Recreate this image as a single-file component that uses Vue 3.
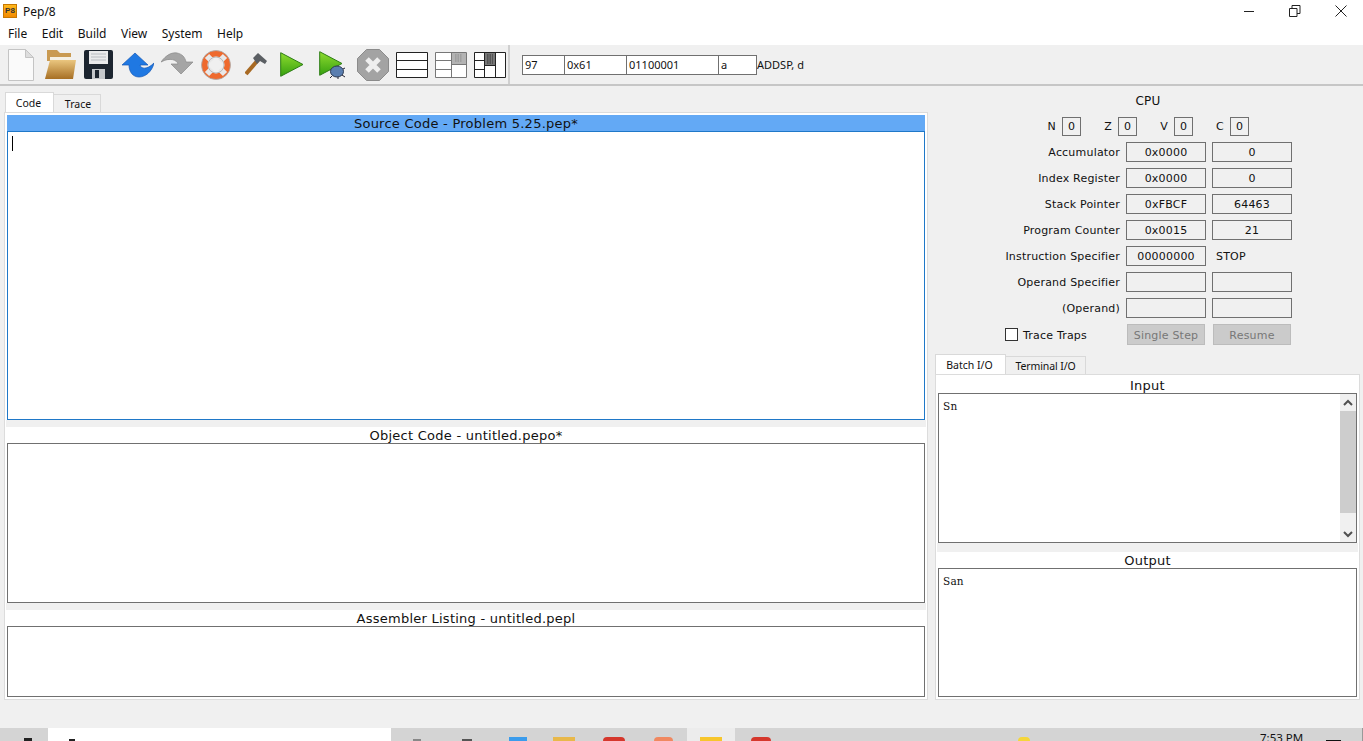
<script setup>
const menus = ['File', 'Edit', 'Build', 'View', 'System', 'Help']
const flags = ['N', 'Z', 'V', 'C']
const registers = [
  { label: 'Accumulator', hex: '0x0000', dec: '0' },
  { label: 'Index Register', hex: '0x0000', dec: '0' },
  { label: 'Stack Pointer', hex: '0xFBCF', dec: '64463' },
  { label: 'Program Counter', hex: '0x0015', dec: '21' },
]
</script>

<template>
  <div class="app">
    <header class="titlebar">
      <span class="logo">P8</span>
      <span class="title">Pep/8</span>
      <div class="winbtns">
        <svg width="12" height="12" viewBox="0 0 12 12"><path d="M1 6.500h10" stroke="#222" fill="none"/></svg>
        <svg width="12" height="12" viewBox="0 0 12 12"><path d="M.5 3.500h7.500v8h-7.500zM3 3.500V.5h8v8h-3" stroke="#222" fill="none"/></svg>
        <svg width="12" height="12" viewBox="0 0 12 12"><path d="M.5.5l11 11M11.500.5l-11 11" stroke="#222" fill="none"/></svg>
      </div>
    </header>
    <nav class="menubar"><span v-for="m in menus" :key="m">{{ m }}</span></nav>

    <div class="toolbar">
      <div class="tools">
        <svg class="t-new" width="26" height="32" viewBox="0 0 26 32"><path d="M.5.5h17l8 8v23H.5z" fill="#fafafa" stroke="#c4c4c4"/><path d="M17.500.5v8h8z" fill="#ddd" stroke="#c4c4c4"/></svg>
        <svg class="t-open" width="31" height="31" viewBox="0 0 31 31"><defs><linearGradient id="fo" x1="0" y1="0" x2="0" y2="1"><stop offset="0" stop-color="#eac67f"/><stop offset="1" stop-color="#a76f24"/></linearGradient></defs><path d="M2 1h10l3 3h11v8H2z" fill="#c99a52"/><path d="M5 8h21v6H5z" fill="#f5f0e4"/><path d="M5 11h26l-3 19H0z" fill="url(#fo)"/></svg>
        <svg class="t-save" width="29" height="29" viewBox="0 0 29 29"><rect width="29" height="29" rx="2" fill="#1c2530"/><rect x="5" y="1" width="19" height="13" fill="#e9eaec"/><path d="M7 4h15M7 7h15M7 10h15" stroke="#b8bcc2"/><rect x="8" y="19" width="13" height="10" fill="#c4c7cb"/><rect x="11" y="20" width="4" height="8" fill="#1c2530"/></svg>
        <svg class="t-undo" width="33" height="26" viewBox="0 0 33 26"><path d="M14 1 27 13H19C20 17 26 18 33 11 31 20 24 25 18 25 12 25 8 20 8 13H1Z" fill="#1f78e2" stroke="#1557b5" stroke-width=".7"/></svg>
        <svg class="t-redo" width="32" height="26" viewBox="0 0 32 26"><path d="M0 10C5 3 11 0 16 1 21 2 24 5 25 10H32L20 22 10 12H17C16 8 9 5 0 10Z" fill="#a5a5a5" stroke="#8a8a8a" stroke-width=".7"/></svg>
        <svg class="t-help" width="30" height="30" viewBox="0 0 30 30"><circle cx="15" cy="15" r="11.500" fill="none" stroke="#ee6a2e" stroke-width="6"/><path d="M6 6l5 5M24 6l-5 5M6 24l5-5M24 24l-5-5" stroke="#e8e8e8" stroke-width="6"/><circle cx="15" cy="15" r="14.500" fill="none" stroke="#a9a9a9" stroke-width=".8"/><circle cx="15" cy="15" r="8" fill="none" stroke="#a9a9a9" stroke-width=".8"/></svg>
        <svg class="t-build" width="22" height="23" viewBox="0 0 22 23"><path d="M1 21 13 7" stroke="#a86a24" stroke-width="4"/><path d="M8 5 13 0l9 8-2 3-5-3-3 3z" fill="#5b5f63"/></svg>
        <svg class="t-run" width="24" height="25" viewBox="0 0 24 25"><defs><linearGradient id="pl" x1="0" y1="0" x2="0" y2="1"><stop offset="0" stop-color="#8fdc2f"/><stop offset="1" stop-color="#36a010"/></linearGradient></defs><path d="M.7.7 23 12.500.7 24.300z" fill="url(#pl)" stroke="#2c7d14"/></svg>
        <svg class="t-debug" width="26" height="28" viewBox="0 0 26 28"><path d="M.7.7 23 12.500.7 24.300z" fill="url(#pl)" stroke="#2c7d14"/><ellipse cx="18" cy="20.500" rx="6.500" ry="5.500" fill="#5a7eb0" stroke="#2c3a52"/><path d="M13 25l-2 2M19 26v2M23 24l3 2M24 18l2-1" stroke="#223"/></svg>
        <svg class="t-stop" width="32" height="32" viewBox="0 0 32 32"><path d="M9.500.5h13l9 9v13l-9 9h-13l-9-9v-13z" fill="#a3a3a3" stroke="#8b8b8b"/><path d="M10 10l12 12M22 10 10 22" stroke="#efefef" stroke-width="5"/></svg>
        <svg class="t-lay" width="32" height="26" viewBox="0 0 32 26"><path d="M.5.500h31v25H.5zM.5 8.500h31M.5 17.500h31" fill="#fff" stroke="#222"/></svg>
        <svg class="t-lay" width="32" height="26" viewBox="0 0 32 26"><path d="M.5.500h31v25H.5z" fill="#fff"/><rect x="16" y="1" width="15" height="11" fill="#b3b3b3"/><path d="M20 3h7M20 5h7M20 7h7M20 9h7" stroke="#8b8b8b" stroke-dasharray="1.500 1"/><path d="M.5.500h31v25H.5zM16.500.5v25M.5 8.500h16M.5 17.500h16M16.500 12.500h15" fill="none" stroke="#777"/></svg>
        <svg class="t-lay" width="32" height="26" viewBox="0 0 32 26"><path d="M.5.500h31v25H.5z" fill="#fff"/><rect x="11" y="1" width="10" height="12" fill="#777"/><path d="M13 3h6M13 5h6M13 7h6M13 9h6M13 11h6" stroke="#333" stroke-dasharray="1.500 1"/><path d="M.5.500h31v25H.5zM10.500.5v25M21.500.5v25M.5 8.500h10M.5 17.500h10M10.500 13.500h11" fill="none" stroke="#222"/></svg>
      </div>
      <div class="ascii">
        <span class="f1">97</span><span class="f2">0x61</span><span class="f3">01100001</span><span class="f4">a</span>
        <span class="mnemonic">ADDSP, d</span>
      </div>
    </div>

    <main class="main">
      <section class="left">
        <div class="tabs">
          <span class="tab on t-code">Code</span>
          <span class="tab t-trace">Trace</span>
        </div>
        <div class="panel">
          <div class="pane src">
            <div class="cap hl">Source Code - Problem 5.25.pep*</div>
            <div class="edit focus"><i class="caret"></i></div>
          </div>
          <div class="band"></div>
          <div class="pane obj">
            <div class="cap">Object Code - untitled.pepo*</div>
            <div class="edit"></div>
          </div>
          <div class="band"></div>
          <div class="pane asm">
            <div class="cap">Assembler Listing - untitled.pepl</div>
            <div class="edit"></div>
          </div>
        </div>
      </section>

      <section class="right">
        <div class="cpu">
          <div class="cpu-title">CPU</div>
          <div class="flags">
            <div v-for="f in flags" :key="f" class="flag"><span class="fl">{{ f }}</span><span class="fv">0</span></div>
          </div>
          <div class="regs">
            <template v-for="r in registers" :key="r.label">
              <span class="rl">{{ r.label }}</span><span class="rv">{{ r.hex }}</span><span class="rv">{{ r.dec }}</span>
            </template>
            <span class="rl">Instruction Specifier</span><span class="rv">00000000</span><span class="rt">STOP</span>
            <span class="rl">Operand Specifier</span><span class="rv"></span><span class="rv"></span>
            <span class="rl">(Operand)</span><span class="rv"></span><span class="rv"></span>
          </div>
          <div class="actions">
            <i class="check"></i><span class="trace">Trace Traps</span>
            <span class="btn b1">Single Step</span><span class="btn">Resume</span>
          </div>
        </div>
        <div class="tabs io">
          <span class="tab on t-batch">Batch I/O</span>
          <span class="tab t-term">Terminal I/O</span>
        </div>
        <div class="iopanel">
          <div class="cap">Input</div>
          <div class="iobox inbox">
            <span class="mono">Sn</span>
            <div class="scroll">
              <svg width="16" height="17" viewBox="0 0 16 17"><path d="M4 11l4-4 4 4" fill="none" stroke="#505050" stroke-width="2"/></svg>
              <div class="thumb"></div>
              <svg width="16" height="17" viewBox="0 0 16 17"><path d="M4 7l4 4 4-4" fill="none" stroke="#505050" stroke-width="2"/></svg>
            </div>
          </div>
          <div class="band"></div>
          <div class="cap">Output</div>
          <div class="iobox outbox"><span class="mono">San</span></div>
        </div>
      </section>
    </main>

    <footer class="taskbar">
      <i class="tk-mark"></i>
      <div class="search"><i class="tk-mark2"></i></div>
      <i class="tk-g g1"></i><i class="tk-g g2"></i>
      <i class="ico task-blue"></i><i class="ico folder"></i><i class="ico red r1"></i><i class="ico orange"></i>
      <div class="active"><i class="ico yellow"></i></div>
      <i class="ico red r2"></i>
      <i class="ico sun"></i>
      <span class="clock">7:53 PM</span>
      <i class="notif"></i>
    </footer>
  </div>
</template>

<style scoped>
.app {
  width: 1363px;
  height: 741px;
  overflow: hidden;
  display: flex;
  flex-direction: column;
  background: #f0f0f0;
  color: #111;
  font: 12px "Noto Sans", sans-serif;
}
.titlebar {
  height: 22px;
  background: #fff;
  display: flex;
  align-items: center;
  flex: none;
}
.logo {
  width: 14px;
  height: 14px;
  box-sizing: border-box;
  margin: 0 6px 0 3px;
  background: linear-gradient(#ffb81c, #f28a00);
  border: 1px solid #c77800;
  color: #333;
  font: bold 8px/12px "Liberation Sans", sans-serif;
  text-align: center;
}
.winbtns {
  margin-left: auto;
  display: flex;
  gap: 34px;
  padding-right: 16px;
}
.menubar {
  height: 22px;
  background: #fff;
  display: flex;
  align-items: center;
  gap: 14.500px;
  padding-left: 8px;
  flex: none;
}
.toolbar {
  height: 42px;
  flex: none;
  display: flex;
  align-items: center;
  border-top: 1px solid #fff;
  border-bottom: 2px solid #c6c6c6;
  box-sizing: border-box;
}
.tools {
  display: flex;
  align-items: center;
  width: 510px;
  height: 100%;
  padding-left: 8px;
  box-sizing: border-box;
  border-right: 2px solid #d0d0d0;
}
.tools svg { flex: none; }
.t-new { margin-right: 11px; }
.t-open { margin-right: 8px; }
.t-save { margin-right: 8px; }
.t-undo { margin-right: 7px; }
.t-redo { margin-right: 8px; }
.t-help { margin-right: 14px; }
.t-build { margin-right: 13px; }
.t-run { margin-right: 15px; }
.t-debug { margin-right: 12px; }
.t-stop { margin-right: 7px; }
.t-lay { margin-right: 7px; }
.ascii {
  display: flex;
  align-items: center;
  margin-left: 12px;
  font-size: 11px;
}
.ascii span:not(.mnemonic) {
  height: 20px;
  box-sizing: border-box;
  border: 1px solid #707070;
  border-left-width: 0;
  background: #fff;
  padding-left: 2px;
  line-height: 18px;
}
.f1 { width: 43px; border-left-width: 1px !important; }
.f2 { width: 62px; }
.f3 { width: 92px; }
.f4 { width: 38px; }
.mnemonic { white-space: nowrap; }

.main {
  flex: 1;
  min-height: 0;
  display: flex;
  align-items: flex-start;
  padding: 7px 3px 0 4px;
  gap: 7px;
}
.left { width: 924px; flex: none; }
.right { flex: 1; min-width: 0; }
.tabs {
  display: flex;
  align-items: flex-end;
  height: 19px;
  padding-left: 1px;
  box-sizing: border-box;
}
.tab {
  box-sizing: border-box;
  height: 18px;
  border: 1px solid #d9d9d9;
  border-bottom: 0;
  text-align: center;
  line-height: 19px;
  font-size: 10.500px;
}
.tab.on { background: #fff; height: 20px; margin-top: -2px; line-height: 21px; }
.t-code { width: 49px; padding-right: 2px; }
.t-trace { width: 47px; border-left: 0; padding-left: 2px; }
.panel {
  height: 588px;
  background: #fff;
  border: 1px solid #dcdcdc;
  box-sizing: border-box;
  padding: 2px;
  display: flex;
  flex-direction: column;
}
.band { height: 7px; flex: none; background: #f0f0f0; margin: 0 -1px; }
.pane { display: flex; flex-direction: column; flex: none; }
.src { height: 305px; }
.obj { height: 176px; }
.asm { height: 87px; }
.cap {
  height: 16px;
  flex: none;
  text-align: center;
  font: 13px/17px "DejaVu Sans", sans-serif;
  letter-spacing: .25px;
}
.hl { background: #63a9f5; }
.edit {
  flex: 1;
  background: #fff;
  border: 1px solid #707070;
}
.edit.focus { border-color: #1f78c8; padding: 4px; }
.caret {
  display: block;
  width: 1px;
  height: 15px;
  background: #000;
}

.cpu { height: 262px; display: flex; flex-direction: column; font: 11px "DejaVu Sans", sans-serif; letter-spacing: .2px; }
.cpu-title { text-align: center; font-size: 12px; line-height: 16px; margin-left: 1px; }
.flags {
  display: flex;
  gap: 19px;
  padding: 8px 0 0 109px;
}
.flag { display: flex; align-items: center; gap: 6px; justify-content: flex-end; width: 37px; }
.fv, .rv {
  box-sizing: border-box;
  border: 1px solid #707070;
  text-align: center;
}
.fv { width: 19px; height: 19px; line-height: 17px; flex: none; }
.regs {
  display: grid;
  grid-template-columns: 185px 80px 80px;
  grid-auto-rows: 20px;
  column-gap: 6px;
  row-gap: 6px;
  margin-top: 6px;
}
.rl { text-align: right; line-height: 21px; white-space: nowrap; }
.rv { line-height: 19px; }
.rt { line-height: 21px; padding-left: 4px; }
.actions {
  display: flex;
  align-items: center;
  margin-top: 6px;
  padding-left: 70px;
  height: 21px;
}
.check {
  width: 13px;
  height: 13px;
  border: 1px solid #333;
  background: #fff;
  margin-right: 5px;
  flex: none;
  box-sizing: border-box;
}
.trace { width: 104px; height: 21px; white-space: nowrap; line-height: 23px; }
.btn {
  width: 78px;
  height: 21px;
  box-sizing: border-box;
  background: #cbcbcb;
  border: 1px solid #bcbcbc;
  color: #777;
  text-align: center;
  line-height: 21px;
}
.b1 { margin-right: 8px; }
.tabs.io { padding-left: 0; height: 19px; }
.t-batch { width: 71px; padding-right: 2px; }
.t-term { width: 80px; border-left: 0; letter-spacing: -.1px; }
.iopanel {
  height: 326px;
  box-sizing: border-box;
  background: #fff;
  border: 1px solid #dcdcdc;
  padding: 2px;
  display: flex;
  flex-direction: column;
}
.iobox {
  background: #fff;
  border: 1px solid #707070;
  box-sizing: border-box;
  display: flex;
  justify-content: space-between;
  flex: none;
}
.inbox { height: 150px; }
.outbox { height: 129px; }
.iopanel .band { height: 9px; }
.mono {
  font: 10.500px/14px "DejaVu Serif", serif;
  letter-spacing: .2px;
  padding: 5px 4px;
}
.scroll {
  width: 16px;
  background: #f0f0f0;
  display: flex;
  flex-direction: column;
  flex: none;
}
.scroll svg { flex: none; }
.thumb { flex: 1; background: #cdcdcd; margin-bottom: 12px; }

.taskbar {
  height: 13px;
  flex: none;
  overflow: hidden;
  background: #d4d4d4;
  display: flex;
  align-items: flex-start;
  border-right: 1px solid #999;
}
.taskbar i { display: block; flex: none; }
.tk-mark { width: 8px; height: 3px; margin: 10px 0 0 24px; background: #222; }
.search { width: 343px; height: 13px; margin-left: 16px; background: #fff; flex: none; overflow: hidden; }
.tk-mark2 { width: 6px; height: 2px; margin: 11px 0 0 21px; background: #222; }
.tk-g { height: 2px; margin-top: 11px; }
.g1 { width: 8px; margin-left: 22px; background: #888; }
.g2 { width: 10px; margin-left: 41px; background: #555; }
.ico { height: 4px; margin-top: 9px; }
.task-blue { width: 18px; margin-left: 37px; background: #3b9cec; }
.folder { width: 22px; margin-left: 26px; background: #e8b84a; }
.r1 { width: 22px; margin-left: 28px; border-radius: 11px 11px 0 0; }
.red { background: #d5372c; }
.orange { width: 19px; margin-left: 29px; background: #f08860; border-radius: 10px 10px 0 0; }
.active { width: 48px; height: 13px; margin-left: 14px; background: #ececec; flex: none; overflow: hidden; }
.yellow { width: 22px; margin: 9px 0 0 13px; background: #f7c62c; }
.r2 { width: 20px; margin-left: 16px; border-radius: 10px 10px 0 0; }
.sun { width: 12px; margin-left: 247px; background: #f5d63a; border-radius: 6px 6px 0 0; }
.clock { margin-left: 230px; margin-top: 3px; font: 11.500px/14px "Noto Sans", sans-serif; white-space: nowrap; }
.notif { width: 15px; height: 1px; margin: 12px 0 0 23px; background: #111; }
</style>
